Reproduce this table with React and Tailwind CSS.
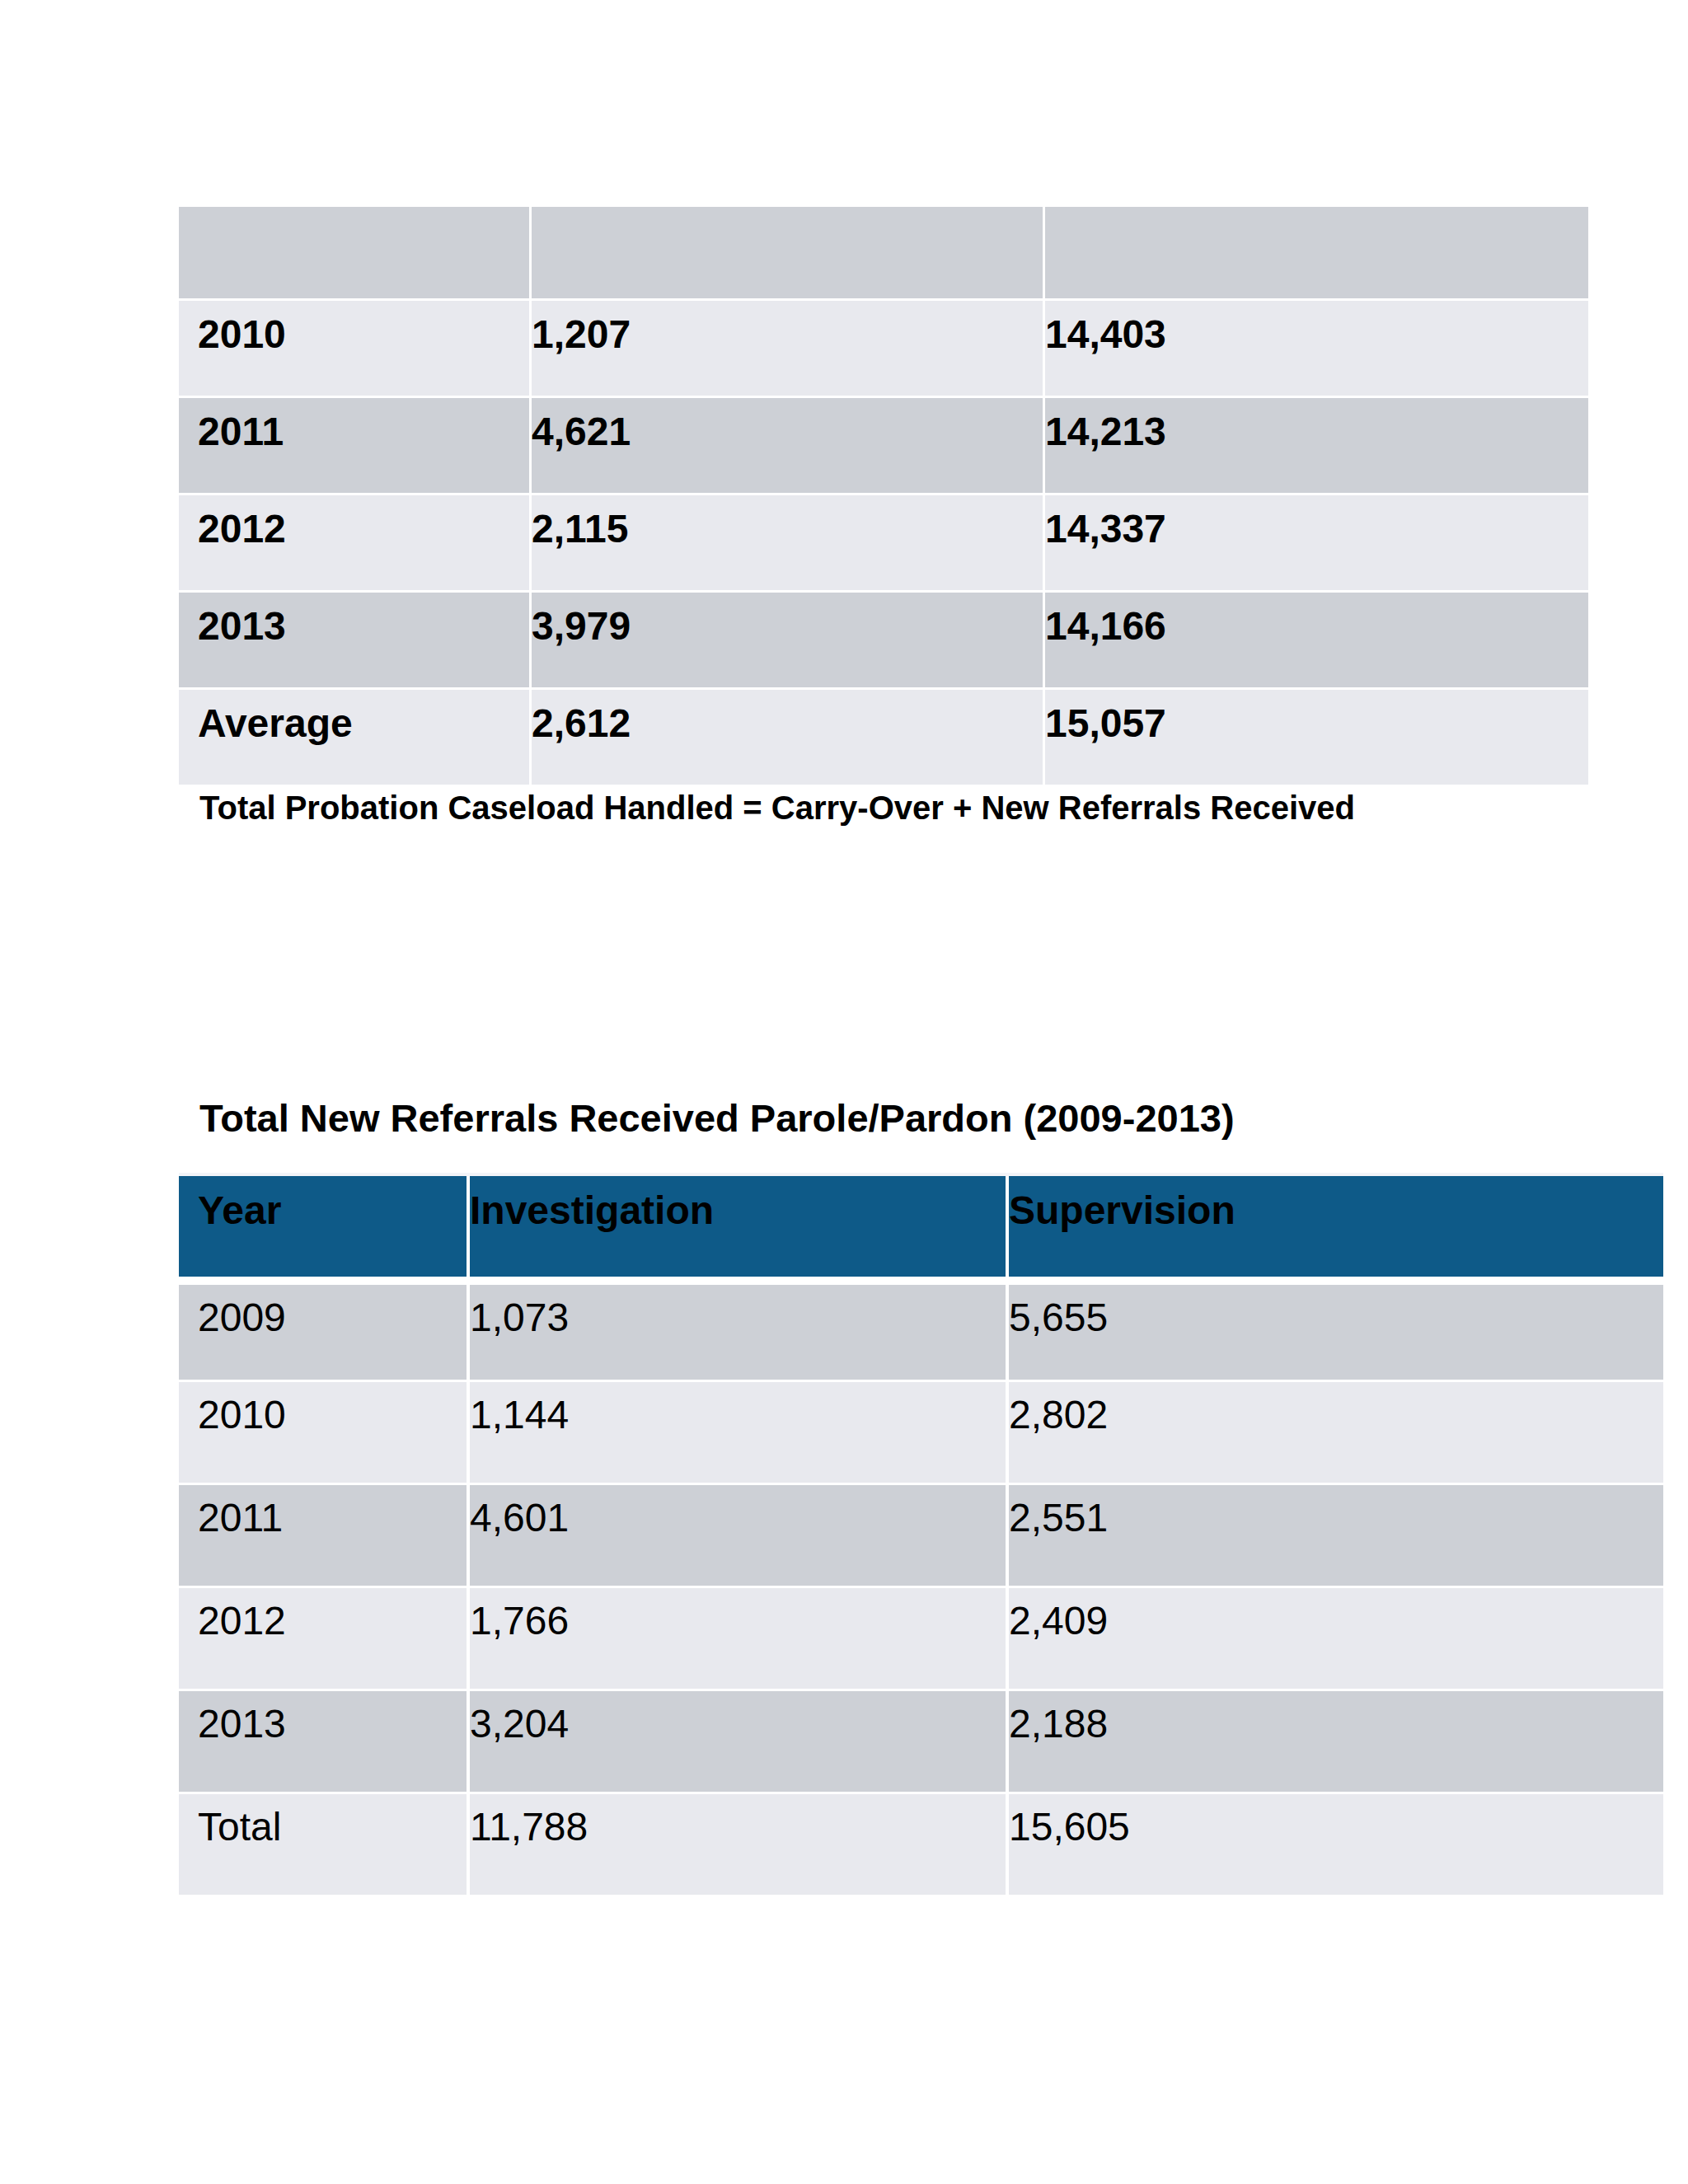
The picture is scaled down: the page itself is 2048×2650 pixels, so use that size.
import React from "react";

const CASELOAD = [
  { year: "2010", a: "1,207", b: "14,403" },
  { year: "2011", a: "4,621", b: "14,213" },
  { year: "2012", a: "2,115", b: "14,337" },
  { year: "2013", a: "3,979", b: "14,166" },
  { year: "Average", a: "2,612", b: "15,057" },
];

const REFERRALS = [
  { year: "2009", inv: "1,073", sup: "5,655", h: "h-[115px]" },
  { year: "2010", inv: "1,144", sup: "2,802", h: "h-[122px]" },
  { year: "2011", inv: "4,601", sup: "2,551", h: "h-[122px]" },
  { year: "2012", inv: "1,766", sup: "2,409", h: "h-[122px]" },
  { year: "2013", inv: "3,204", sup: "2,188", h: "h-[122px]" },
  { year: "Total", inv: "11,788", sup: "15,605", h: "h-[122px]" },
];

const LIGHT = "bg-[#e8e9ee]";
const DARK = "bg-[#cdd0d6]";

function CaseloadTable() {
  return (
    <div className="grid w-[1710px] grid-cols-[425px_620px_659px] gap-[3px]">
      <div className={`h-[111px] ${DARK}`} />
      <div className={`h-[111px] ${DARK}`} />
      <div className={`h-[111px] ${DARK}`} />
      {CASELOAD.map((row, i) => {
        const bg = i % 2 === 0 ? LIGHT : DARK;
        return (
          <React.Fragment key={row.year}>
            <div className={`h-[115px] pl-[23px] pt-[17px] ${bg}`}>{row.year}</div>
            <div className={`h-[115px] pt-[17px] ${bg}`}>{row.a}</div>
            <div className={`h-[115px] pt-[17px] ${bg}`}>{row.b}</div>
          </React.Fragment>
        );
      })}
    </div>
  );
}

function ReferralsTable() {
  return (
    <div className="w-[1801px]">
      <div className="h-[4px] bg-[#f3f4f8]" />
      <div className="grid grid-cols-[349px_650px_794px] gap-x-[4px] font-bold">
        <div className="h-[122px] bg-[#0e5a88] pl-[23px] pt-[18px]">Year</div>
        <div className="h-[122px] bg-[#0e5a88] pt-[18px]">Investigation</div>
        <div className="h-[122px] bg-[#0e5a88] pt-[18px]">Supervision</div>
      </div>
      <div className="mt-[10px] grid grid-cols-[349px_650px_794px] gap-x-[4px] gap-y-[3px]">
        {REFERRALS.map((row, i) => {
          const bg = i % 2 === 0 ? DARK : LIGHT;
          return (
            <React.Fragment key={row.year}>
              <div className={`${row.h} pl-[23px] pt-[16px] ${bg}`}>{row.year}</div>
              <div className={`${row.h} pt-[16px] ${bg}`}>{row.inv}</div>
              <div className={`${row.h} pt-[16px] ${bg}`}>{row.sup}</div>
            </React.Fragment>
          );
        })}
      </div>
    </div>
  );
}

export default function App() {
  return (
    <div className="min-h-[2650px] w-[2048px] bg-white font-['Liberation_Sans',Arial,sans-serif] text-black">
      <main className="pl-[217px] pt-[251px]">
        <section className="text-[48px] font-bold leading-[48px]">
          <CaseloadTable />
        </section>
        <p className="mt-[8px] pl-[25px] text-[40px] font-bold leading-[40px]">
          Total Probation Caseload Handled = Carry-Over + New Referrals Received
        </p>

        <h2 className="mt-[333px] pl-[25px] text-[47px] font-bold leading-[47px]">
          Total New Referrals Received Parole/Pardon (2009-2013)
        </h2>
        <section className="mt-[43px] text-[48px] leading-[48px]">
          <ReferralsTable />
        </section>
      </main>
    </div>
  );
}
